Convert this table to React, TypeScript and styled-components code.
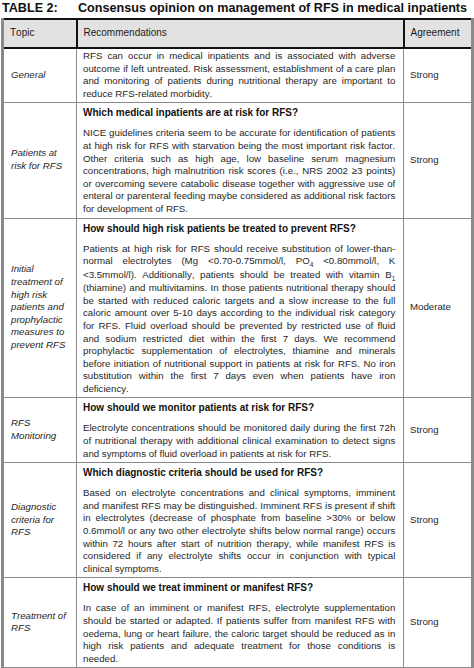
import React from "react";
import styled, { createGlobalStyle } from "styled-components";

const GlobalStyle = createGlobalStyle`
  html, body {
    margin: 0;
    padding: 0;
    background: #ffffff;
  }
  body {
    font-family: "Liberation Sans", Arial, sans-serif;
    color: #1f1f1f;
  }
`;

const Page = styled.div`
  width: 474px;
  height: 668px;
  overflow: hidden;
  padding: 1px 0 0 1px;
  box-sizing: border-box;
`;

const Title = styled.div`
  display: grid;
  grid-template-columns: 76px 1fr;
  font-weight: bold;
  font-size: 12.6px;
  line-height: 15px;
  color: #111;
  height: 17px;
  padding-left: 1px;
  white-space: nowrap;
`;

const Table = styled.table`
  width: 471px;
  table-layout: fixed;
  border-collapse: collapse;
  font-size: 9.7px;
  line-height: 12.6px;
  font-kerning: none;
  border-left: 3px solid #8a8a8a;
  border-right: 3px solid #8a8a8a;
`;

const HeadCell = styled.th`
  background: #e2e2e2;
  border: 2px solid #111;
  text-align: left;
  font-weight: normal;
  font-size: 10px;
  height: 27px;
  padding: 0 6px;
  color: #1a1a1a;
`;

const Cell = styled.td`
  border: 1.5px solid #8a8a8a;
  vertical-align: middle;
  padding: 1px 6px 2px;
`;

const TopicCell = styled(Cell)`
  font-style: italic;
  padding-left: 7px;
`;

const RecCell = styled(Cell)`
  text-align: justify;
`;

const AgreeCell = styled(Cell)`
  padding-left: 6px;
`;

const Question = styled.p`
  margin: 2px 0 8px;
  font-weight: bold;
  font-size: 10px;
  line-height: 13px;
  color: #111;
`;

const Body = styled.p`
  width: 312.3px;
  margin: 0;
`;

const Sub = styled.span`
  font-size: 6.5px;
  line-height: 1;
  vertical-align: -3px;
`;

type Row = {
  topic: string;
  question?: string;
  body: React.ReactNode;
  agreement: string;
};

const rows: Row[] = [
  {
    topic: "General",
    body: "RFS can occur in medical inpatients and is associated with adverse outcome if left untreated. Risk assessment, establishment of a care plan and monitoring of patients during nutritional therapy are important to reduce RFS-related morbidity.",
    agreement: "Strong",
  },
  {
    topic: "Patients at risk for RFS",
    question: "Which medical inpatients are at risk for RFS?",
    body: "NICE guidelines criteria seem to be accurate for identification of patients at high risk for RFS with starvation being the most important risk factor. Other criteria such as high age, low baseline serum magnesium concentrations, high malnutrition risk scores (i.e., NRS 2002 \u22653 points) or overcoming severe catabolic disease together with aggressive use of enteral or parenteral feeding maybe considered as additional risk factors for development of RFS.",
    agreement: "Strong",
  },
  {
    topic: "Initial treatment of high risk patients and prophylactic measures to prevent RFS",
    question: "How should high risk patients be treated to prevent RFS?",
    body: (
      <>
        Patients at high risk for RFS should receive substitution of lower-than-normal
        electrolytes (Mg &lt;0.70-0.75mmol/l, PO<Sub>4</Sub> &lt;0.80mmol/l, K
        &lt;3.5mmol/l). Additionally, patients should be treated with vitamin B<Sub>1</Sub>{" "}
        (thiamine) and multivitamins. In those patients nutritional therapy should be
        started with reduced caloric targets and a slow increase to the full caloric
        amount over 5-10 days according to the individual risk category for RFS. Fluid
        overload should be prevented by restricted use of fluid and sodium restricted
        diet within the first 7 days. We recommend prophylactic supplementation of
        electrolytes, thiamine and minerals before initiation of nutritional support in
        patients at risk for RFS. No iron substitution within the first 7 days even when
        patients have iron deficiency.
      </>
    ),
    agreement: "Moderate",
  },
  {
    topic: "RFS Monitoring",
    question: "How should we monitor patients at risk for RFS?",
    body: "Electrolyte concentrations should be monitored daily during the first 72h of nutritional therapy with additional clinical examination to detect signs and symptoms of fluid overload in patients at risk for RFS.",
    agreement: "Strong",
  },
  {
    topic: "Diagnostic criteria for RFS",
    question: "Which diagnostic criteria should be used for RFS?",
    body: "Based on electrolyte concentrations and clinical symptoms, imminent and manifest RFS may be distinguished. Imminent RFS is present if shift in electrolytes (decrease of phosphate from baseline >30% or below 0.6mmol/l or any two other electrolyte shifts below normal range) occurs within 72 hours after start of nutrition therapy, while manifest RFS is considered if any electrolyte shifts occur in conjunction with typical clinical symptoms.",
    agreement: "Strong",
  },
  {
    topic: "Treatment of RFS",
    question: "How should we treat imminent or manifest RFS?",
    body: "In case of an imminent or manifest RFS, electrolyte supplementation should be started or adapted. If patients suffer from manifest RFS with oedema, lung or heart failure, the caloric target should be reduced as in high risk patients and adequate treatment for those conditions is needed.",
    agreement: "Strong",
  },
];

export default function App() {
  return (
    <>
      <GlobalStyle />
      <Page>
        <Title>
          <span>TABLE 2:</span>
          <span>Consensus opinion on management of RFS in medical inpatients</span>
        </Title>
        <Table>
          <colgroup>
            <col style={{ width: 74 }} />
            <col style={{ width: 327 }} />
            <col style={{ width: 69 }} />
          </colgroup>
          <thead>
            <tr>
              <HeadCell>Topic</HeadCell>
              <HeadCell>Recommendations</HeadCell>
              <HeadCell>Agreement</HeadCell>
            </tr>
          </thead>
          <tbody>
            {rows.map((r) => (
              <tr key={r.topic}>
                <TopicCell>{r.topic}</TopicCell>
                <RecCell>
                  {r.question && <Question>{r.question}</Question>}
                  <Body>{r.body}</Body>
                </RecCell>
                <AgreeCell>{r.agreement}</AgreeCell>
              </tr>
            ))}
          </tbody>
        </Table>
      </Page>
    </>
  );
}
